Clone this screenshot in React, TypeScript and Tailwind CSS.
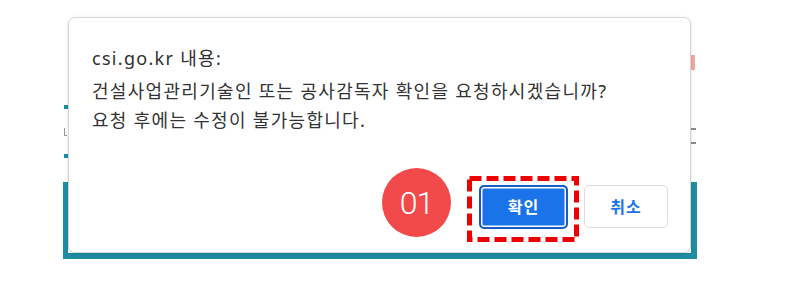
import React from "react";

export default function App() {
  const kr = { fontFamily: '"Noto Sans", "Noto Sans CJK KR", sans-serif' };
  return (
    <div className="relative w-[800px] h-[282px] bg-white overflow-hidden" style={kr}>
      {/* background page peeking out */}
      <div className="ml-[63px] w-[634px] flex flex-col">
        <div className="h-[182px] flex justify-between">
          <div className="w-[5px] flex flex-col items-center">
            <div className="mt-[105px] w-[4px] h-[4px] bg-[#1d8ea3]" />
            <div className="mt-[19px] h-[8px] w-[3px] border-l border-b border-[#9a9a9a]" />
            <div className="mt-[18px] w-[4px] h-[4px] bg-[#1d8ea3]" />
          </div>
          <div className="w-[6px] flex flex-col items-start">
            <div className="mt-[55px] w-[4px] h-[15px] bg-[#f4a7a0]" />
            <div className="mt-[58px] w-[5px] h-[16px] border-t-2 border-b-2 border-[#8c8c8c]" />
          </div>
        </div>
        <div className="h-[77px] border-l-[5px] border-r-[6px] border-b-[6px] border-[#1d8ea3]" />
      </div>

      {/* dialog */}
      <div className="absolute left-[68px] top-[17px] w-[623px] h-[236px] bg-white rounded-[7px] border border-[#d6d6d6] shadow-[0_1px_4px_rgba(0,0,0,0.12)] flex flex-col pl-[23px] pr-[22px] pt-[28px] pb-[23px]">
        <div className="text-[18px] leading-[24px] tracking-[1.3px] text-[#303030]">csi.go.kr 내용:</div>
        <div className="mt-[7px] text-[18px] leading-[29px] tracking-[1.3px] text-[#333333]">
          <div>건설사업관리기술인 또는 공사감독자 확인을 요청하시겠습니까?</div>
          <div>요청 후에는 수정이 불가능합니다.</div>
        </div>
        <div className="flex-1" />
        <div className="flex justify-end gap-[16px]">
          <button className="w-[89px] h-[44px] rounded-[5px] border-2 border-[#1a5cc4] bg-[#1a73e8] shadow-[inset_0_0_0_1.5px_#ffffff] text-white text-[16px] font-semibold tracking-[1px]">
            확인
          </button>
          <button className="w-[84px] h-[43px] rounded-[5px] border border-[#dadce0] bg-white text-[#1a73e8] text-[16px] font-semibold tracking-[1px]">
            취소
          </button>
        </div>
      </div>

      {/* annotation: number badge */}
      <div className="absolute left-[382px] top-[168px] w-[69px] h-[69px] rounded-full bg-[#f24a4a] flex items-center justify-center">
        <span className="text-white text-[32px] leading-none tracking-[-1px]" style={{ fontFamily: 'Roboto, sans-serif', fontWeight: 300 }}>
          01
        </span>
      </div>

      {/* annotation: dashed highlight */}
      <svg className="absolute left-[467px] top-[176px]" width="112" height="66" viewBox="0 0 112 66">
        <rect x="2.5" y="2.5" width="107" height="61" fill="none" stroke="#ee0000" strokeWidth="5" strokeDasharray="12 5" />
      </svg>
    </div>
  );
}
